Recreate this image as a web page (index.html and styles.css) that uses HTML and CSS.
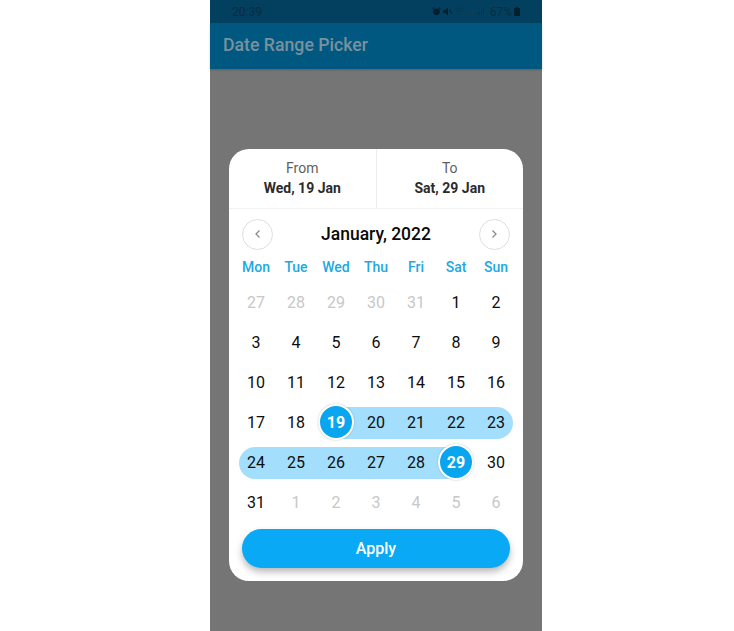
FILE: index.html
```html
<!DOCTYPE html>
<html lang="en">
<head>
<meta charset="utf-8">
<title>Date Range Picker</title>
<link rel="stylesheet" href="styles.css">
</head>
<body>
<div class="phone">
  <div class="status">
    <span class="time">20:39</span>
    <div class="status-right">
      <svg class="si" width="9" height="9" viewBox="0 0 9 9"><circle cx="4.5" cy="4.8" r="3.4" fill="#01202f"/><path d="M.6 1.8 2 .6M8.4 1.8 7 .6" stroke="#01202f" stroke-width="1.1"/></svg>
      <svg class="si" width="9" height="9" viewBox="0 0 9 9"><path d="M0 3h2l3-2.500v8L2 6H0z" fill="#01202f"/><path d="M6.500 2.500 8.500 6.500" stroke="#01202f"/></svg>
      <svg class="si wifi" width="10" height="9" viewBox="0 0 10 9"><path d="M.5 3a6 6 0 0 1 9 0M2 5a4 4 0 0 1 6 0M3.500 7a2 2 0 0 1 3 0" fill="none" stroke="#0a3550" stroke-width="1"/></svg>
      <svg class="si" width="21" height="8" viewBox="0 0 21 8"><path d="M0 7h1V6H0zM2 7h1V5H2zM4 7h1V4H4zM6 7h1V3H6z" fill="#0e3f58"/><path d="M11 7h1V6h-1zM13 7h1V4h-1zM15 7h1V2h-1zM17 7h1V0h-1z" fill="#07304a"/></svg>
      <span class="pct">67%</span>
      <svg class="si" width="6" height="9" viewBox="0 0 6 9"><path d="M2 0h2v1h2v8H0V1h2z" fill="#01202f"/></svg>
    </div>
  </div>
  <div class="appbar">Date Range Picker</div>
  <div class="scrim">
    <div class="card">
      <div class="head">
        <div class="head-cell"><span class="head-label">From</span><span class="head-date">Wed, 19 Jan</span></div>
        <div class="head-cell"><span class="head-label">To</span><span class="head-date">Sat, 29 Jan</span></div>
      </div>
      <div class="nav">
        <button class="nav-btn" aria-label="Previous"><svg width="12" height="12" viewBox="0 0 12 12"><path d="M7.500 2.500 4 6l3.500 3.500" fill="none" stroke="#8a8a8a" stroke-width="1.300"/></svg></button>
        <span class="month">January, 2022</span>
        <button class="nav-btn" aria-label="Next"><svg width="12" height="12" viewBox="0 0 12 12"><path d="M4.500 2.500 8 6 4.500 9.500" fill="none" stroke="#8a8a8a" stroke-width="1.300"/></svg></button>
      </div>
      <div class="weekdays">
        <span>Mon</span><span>Tue</span><span>Wed</span><span>Thu</span><span>Fri</span><span>Sat</span><span>Sun</span>
      </div>
      <div class="days">
        <span class="day out">27</span><span class="day out">28</span><span class="day out">29</span><span class="day out">30</span><span class="day out">31</span><span class="day">1</span><span class="day">2</span>
        <span class="day">3</span><span class="day">4</span><span class="day">5</span><span class="day">6</span><span class="day">7</span><span class="day">8</span><span class="day">9</span>
        <span class="day">10</span><span class="day">11</span><span class="day">12</span><span class="day">13</span><span class="day">14</span><span class="day">15</span><span class="day">16</span>
        <span class="day">17</span><span class="day">18</span><span class="day start"><b>19</b></span><span class="day mid">20</span><span class="day mid">21</span><span class="day mid">22</span><span class="day mid row-end">23</span>
        <span class="day mid row-start">24</span><span class="day mid">25</span><span class="day mid">26</span><span class="day mid">27</span><span class="day mid">28</span><span class="day end"><b>29</b></span><span class="day">30</span>
        <span class="day">31</span><span class="day out">1</span><span class="day out">2</span><span class="day out">3</span><span class="day out">4</span><span class="day out">5</span><span class="day out">6</span>
      </div>
      <button class="apply">Apply</button>
    </div>
  </div>
</div>
</body>
</html>
```

FILE: styles.css
```css
* { box-sizing: border-box; }
html, body { margin: 0; padding: 0; height: 100%; background: #fff; }
body { padding-left: 210px; overflow: hidden; font-family: Roboto, "Liberation Sans", sans-serif; }
.phone { width: 332px; height: 631px; display: flex; flex-direction: column; background: #757575; }
.status { height: 23px; flex: none; background: #03405f; display: flex; align-items: center; justify-content: space-between; padding: 0 22px 0 22px; color: #0a2a3b; font-size: 12px; }
.time { color: #0a2c40; }
.status-right { display: flex; align-items: center; gap: 2px; }
.si { display: block; }
.pct { color: #0a2c3e; font-size: 12px; margin-left: 1px; }
.appbar { height: 46px; flex: none; background: #00577f; color: #78919e; font-size: 17.700px; font-weight: 500; display: flex; align-items: center; padding: 0 13px 2px; box-shadow: 0 1px 2px rgba(0,0,0,.2); position: relative; }
.scrim { flex: 1; display: flex; justify-content: center; padding-top: 80px; }
.card { width: 294px; height: 432px; background: #fff; border-radius: 20px; display: flex; flex-direction: column; align-items: center; }
.head { width: 100%; height: 60px; flex: none; display: flex; border-bottom: 1px solid #f3f3f3; }
.head-cell { flex: 1; display: flex; flex-direction: column; align-items: center; padding-top: 11px; gap: 4px; }
.head-cell + .head-cell { border-left: 1px solid #ededed; }
.head-label { font-size: 14px; line-height: 16px; color: #5f5f5f; }
.head-date { font-size: 14px; line-height: 16px; font-weight: 700; color: #2b2b2b; }
.nav { width: 268px; height: 30px; margin-top: 10px; flex: none; display: flex; align-items: center; justify-content: space-between; }
.nav-btn { width: 31px; height: 31px; padding: 0; border: 1px solid #dedede; border-radius: 50%; background: #fff; display: flex; align-items: center; justify-content: center; }
.month { font-size: 17.500px; font-weight: 500; color: #0a0a0a; }
.weekdays { width: 280px; margin-top: 9px; display: grid; grid-template-columns: repeat(7, 40px); height: 18px; flex: none; }
.weekdays span { text-align: center; font-size: 14px; line-height: 18px; font-weight: 500; color: #22a8e0; }
.days { width: 280px; margin-top: 6px; flex: none; display: grid; grid-template-columns: repeat(7, 40px); grid-auto-rows: 40px; }
.day { display: flex; align-items: center; justify-content: center; font-size: 16px; color: #0d0d0d; position: relative; z-index: 0; }
.out { color: #c8c8c8; }
.mid::before, .start::before, .end::before { content: ""; position: absolute; left: 0; right: 0; top: 4.500px; height: 32px; background: #a3dffd; z-index: -1; }
.start::before { left: 20px; }
.end::before { right: 20px; }
.row-end::before { right: 3px; border-radius: 0 16px 16px 0; }
.row-start::before { left: 3px; border-radius: 16px 0 0 16px; }
.start b, .end b { width: 36px; height: 36px; border-radius: 50%; background: #0aa5ef; border: 2px solid #fff; color: #fff; font-size: 16px; font-weight: 700; display: flex; align-items: center; justify-content: center; box-shadow: 0 0 2px rgba(0,0,0,.25); }
.apply { width: 268px; height: 39px; margin-top: 7px; flex: none; border: 0; border-radius: 20px; background: #0aa9f5; color: #fff; font-family: inherit; font-size: 16px; font-weight: 500; box-shadow: 0 4px 7px rgba(0,0,0,.28); }
```
